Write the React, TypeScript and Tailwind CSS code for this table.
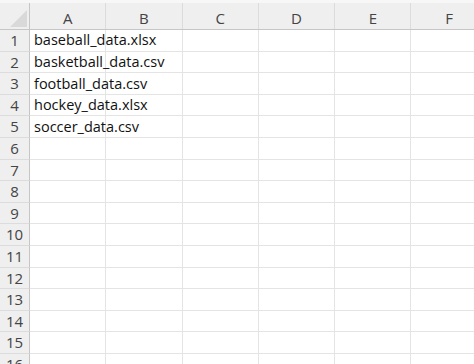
const cols = ["A", "B", "C", "D", "E", "F"];
const data = [
  "baseball_data.xlsx",
  "basketball_data.csv",
  "football_data.csv",
  "hockey_data.xlsx",
  "soccer_data.csv",
];
const rows = Array.from({ length: 16 }, (_, i) => i + 1);

export default function App() {
  return (
    <div
      className="h-[364px] w-[474px] overflow-hidden bg-white"
      style={{ fontFamily: '"Open Sans", "Noto Sans", sans-serif' }}
    >
      <div className="h-[3px] bg-[#f7f7f7]" />
      <div className="flex h-[27px] border-b border-[#c6c6c6] bg-[#efefef]">
        <div className="relative w-[30px] shrink-0 border-r border-[#c6c6c6]">
          <svg className="absolute right-[2px] bottom-[2px]" width="17" height="17" viewBox="0 0 17 17">
            <polygon points="17,0 17,17 0,17" fill="#d9d9d9" />
          </svg>
        </div>
        {cols.map((c) => (
          <div
            key={c}
            className="flex w-[76.3px] shrink-0 items-center justify-center border-r border-[#dcdcdc] pt-[4px] text-[15px] text-[#444]"
          >
            {c}
          </div>
        ))}
      </div>
      {rows.map((r) => (
        <div key={r} className="flex h-[21.6px]">
          <div className="flex w-[30px] shrink-0 items-center justify-center border-r border-b border-[#c6c6c6] border-b-[#dcdcdc] bg-[#efefef] text-[15px] text-[#444]">
            {r}
          </div>
          {cols.map((c, ci) => (
            <div
              key={c}
              className="flex w-[76.3px] shrink-0 items-center overflow-visible whitespace-nowrap border-r border-b border-[#e4e4e4] pl-[4px] text-[14.5px] text-[#111]"
            >
              {ci === 0 && data[r - 1] ? <span className="relative z-10">{data[r - 1]}</span> : null}
            </div>
          ))}
        </div>
      ))}
    </div>
  );
}
